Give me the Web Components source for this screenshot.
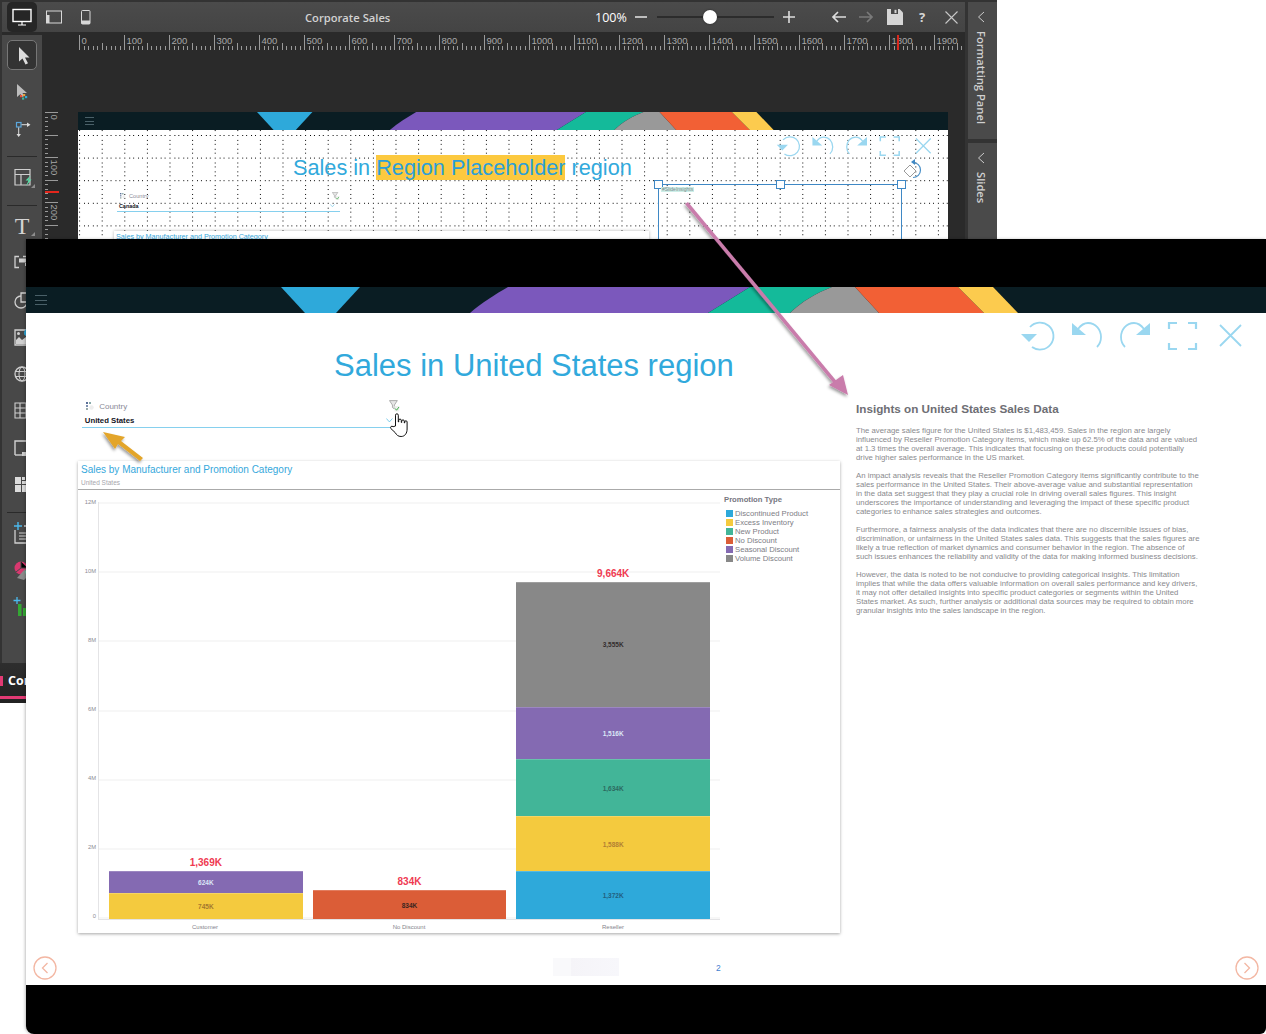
<!DOCTYPE html>
<html lang="en">
<head>
<meta charset="utf-8">
<title>Corporate Sales</title>
<style>
  html, body { margin: 0; height: 100%; background: #fff; overflow: hidden; }
  body { position: relative; font-family: "Liberation Sans", Arial, sans-serif; }
</style>
</head>
<body>
<editor-window></editor-window>
<viewer-window></viewer-window>
<page-annotations></page-annotations>

<script>
class Shadowed extends HTMLElement {
    constructor() {
        super();
        this.attachShadow({ mode: 'open' });
        this.shadowRoot.innerHTML = this.markup();
    }
}

const corner = '<path d="M22 23h4v-4z" fill="#8d8d8d"/>';

const railIcons = {
    select: '<path d="M10 5v14.500l3.500-3 3 6 2.500-1.300-3-5.700h4.500z" fill="#dcdcdc"/>',
    subselect: '<path d="M8 5v13l3.500-3 1.500 3 2-1-1.500-3h4.500z" fill="#bdbdbd"/><rect x="11" y="16" width="2.200" height="2.200" fill="#e8503a"/><rect x="14" y="15" width="2.200" height="2.200" fill="#e9a23b"/><rect x="16" y="17" width="2.200" height="2.200" fill="#2ea9da"/><rect x="13" y="18.500" width="2.200" height="2.200" fill="#42b598"/>',
    connector: '<rect x="7.500" y="6.500" width="4.500" height="4.500" fill="none" stroke="#5aa7dc" stroke-width="1.200"/><path d="M12.500 8.700h6M9.700 11.500v7" stroke="#ddd" fill="none"/><path d="M18 6.500l3.500 2.200-3.500 2.200zM7.500 18l2.200 3 2.200-3z" fill="#ddd"/>',
    dash: '<path d="M6 4.500h15v15.500H6zM6 9.500h15M12 9.500V20" fill="none" stroke="#cfcfcf" stroke-width="1.200"/><path d="M21 11l-4.500 4.500h3L17 21l5.500-6.500h-3l2-3.500z" fill="#58e0a8"/>' + corner,
    image: '<g transform="translate(5 0)"><path d="M5 6.500H1v11h4M9 6.500h13v11" fill="none" stroke="#d0d0d0" stroke-width="1.300"/><rect x="5" y="8.500" width="14" height="4" fill="#d0d0d0"/><rect x="11" y="13" width="8" height="3" fill="#d0d0d0"/></g>',
    pie: '<g transform="translate(5 0)"><circle cx="7" cy="15" r="6" fill="none" stroke="#cfcfcf" stroke-width="1.300"/><path d="M7 6h11v9H7z" fill="#484848" stroke="#cfcfcf" stroke-width="1.300"/></g>',
    picture: '<g transform="translate(5 0)"><path d="M1 6h20v15H1z" fill="none" stroke="#d0d0d0" stroke-width="1.300"/><path d="M2 20v-4l3-3 3 3 4-3 6 5v2z" fill="#d0d0d0"/><circle cx="4.500" cy="9.500" r="1.500" fill="#d0d0d0"/><path d="M10 9c0-3 3-5 6-6v9c-3 1-6 0-6-3z" fill="#2ea9da"/></g>',
    globe: '<g transform="translate(5 0)"><circle cx="8" cy="13" r="7" fill="none" stroke="#cfcfcf" stroke-width="1.300"/><ellipse cx="8" cy="13" rx="3" ry="7" fill="none" stroke="#cfcfcf"/><path d="M1 10.500h14M1 15.500h14" stroke="#cfcfcf"/></g>',
    table: '<g transform="translate(5 0)"><path d="M1 5h16v15H1zM1 10h16M1 15h16M6 5v15M12 5v15" fill="none" stroke="#cfcfcf" stroke-width="1.100"/></g>',
    box: '<g transform="translate(5 0)"><path d="M1 20V6h20v10" fill="none" stroke="#d0d0d0" stroke-width="1.400"/><path d="M1 20h7" stroke="#d0d0d0" stroke-width="1.400"/><rect x="8" y="17" width="10" height="4" fill="#d0d0d0"/></g>',
    blocks: '<g transform="translate(5 0)"><path d="M1 5h6v7H1zM1 13h6v7H1zM8 13h6v7H8zM8 5h3v3H8zM12 5h3v3h-3zM8 9h7v3H8z" fill="#dcdcdc"/></g>',
    report: '<g transform="translate(5 0)"><path d="M1 9v13h14V5h-5" fill="none" stroke="#cfcfcf" stroke-width="1.300"/><path d="M5 12h7M5 15h7M5 18h7" stroke="#cfcfcf"/><path d="M4 1v8M0 5h8" stroke="#4bb8ec" stroke-width="1.400"/></g>',
    piepink: '<g transform="translate(5 0)"><circle cx="7" cy="10" r="6.500" fill="#d8386f"/><path d="M7 3.500V10h6.500M7 10l-5 4" stroke="#484848"/><path d="M3 20l8-9 5 5-6 6z" fill="#8b8b8b"/><path d="M11 13l5 2-3 5z" fill="#6de0b8"/></g>',
    bars: '<g transform="translate(5 0)"><path d="M3 2v7M-.500 5.500h7" stroke="#4bb8ec" stroke-width="1.300"/><rect x="4" y="9" width="3.500" height="12" fill="#34a834"/><rect x="9" y="13" width="4" height="8" fill="#34a834"/></g>'
};

class TopBar extends Shadowed {
    markup() {
        return `
        <style>
          :host { display: flex; align-items: center; height: 30px; background: linear-gradient(#4b4b4b, #444);
                  color: #ddd; font-family: "Open Sans", sans-serif; }
          svg { display: block; flex: none; }
          .active { width: 30px; height: 30px; margin-left: 5px; background: #262626; border-radius: 5px;
                    display: flex; align-items: center; justify-content: center; }
          .title { width: 88px; margin-left: 214px; margin-right: 202px; font-size: 11.200px; font-weight: 600; color: #d2d2d2; white-space: nowrap; }
          .pct { width: 31px; font-size: 12.500px; color: #fff; white-space: nowrap; }
          .slider { position: relative; width: 117px; height: 2px; margin-left: 10px; background: #2c2c2c; }
          .slider i { position: absolute; left: 46px; top: -6px; width: 14px; height: 14px; border-radius: 50%; background: #fff; box-shadow: 0 0 2px #222; }
        </style>
        <div class="active">
          <svg width="22" height="20" viewBox="0 0 22 20"><rect x="2" y="2.500" width="18" height="12" fill="none" stroke="#fff" stroke-width="1.400"/><path d="M11 15v3M7 18h8" stroke="#fff" stroke-width="1.200"/></svg>
        </div>
        <svg style="margin-left:9px" width="17" height="14" viewBox="0 0 17 14"><rect x=".5" y="1" width="15" height="12" fill="none" stroke="#d8d8d8"/><rect x=".5" y="5" width="3" height="8" fill="#d8d8d8"/></svg>
        <svg style="margin-left:18px" width="10" height="15" viewBox="0 0 10 15"><rect x=".5" y=".5" width="8.500" height="13.500" rx="1" fill="none" stroke="#d8d8d8"/><rect x=".5" y="10.500" width="8.500" height="3.500" fill="#d8d8d8"/></svg>
        <div class="title">Corporate Sales</div>
        <div class="pct">100%</div>
        <svg style="margin-left:9px" width="12" height="12" viewBox="0 0 12 12"><path d="M0 6h12" stroke="#ddd" stroke-width="1.600"/></svg>
        <div class="slider"><i></i></div>
        <svg style="margin-left:9px" width="12" height="12" viewBox="0 0 12 12"><path d="M0 6h12M6 0v12" stroke="#ddd" stroke-width="1.600"/></svg>
        <svg style="margin-left:36px" width="15" height="12" viewBox="0 0 15 12"><path d="M15 6H2M7 1L2 6l5 5" fill="none" stroke="#ddd" stroke-width="1.700"/></svg>
        <svg style="margin-left:13px" width="15" height="12" viewBox="0 0 15 12"><path d="M0 6h13M8 1l5 5-5 5" fill="none" stroke="#7a7a7a" stroke-width="1.700"/></svg>
        <svg style="margin-left:13px" width="16" height="16" viewBox="0 0 16 16"><path d="M0 0h12.500L16 3.500V16H0z" fill="#d6d6d6"/><rect x="4" y="0" width="7" height="5" fill="#484848"/><rect x="7.500" y=".8" width="2" height="3.300" fill="#d6d6d6"/></svg>
        <span style="margin-left:16px;width:12px;font:700 13px 'Open Sans',sans-serif;color:#d6d6d6">?</span>
        <svg style="margin-left:14px" width="13" height="13" viewBox="0 0 13 13"><path d="M.5.500l12 12M12.500.500l-12 12" stroke="#c8c8c8" stroke-width="1.100"/></svg>`;
    }
}

class SideRail extends Shadowed {
    markup() {
        const item = (k, extra) => `<div class="item ${extra || ''}"><svg width="26" height="26" viewBox="0 0 26 26">${railIcons[k]}</svg></div>`;
        return `
        <style>
          :host { display: flex; flex-direction: column; align-items: center; width: 40px; margin-top: 3px; padding-top: 1.500px;
                  background: #484848; box-sizing: border-box; }
          .item { width: 40px; height: 37px; flex: none; display: flex; align-items: center; justify-content: center; position: relative; }
          .item.on::before { content: ""; position: absolute; left: 5px; top: 3.500px; width: 28px; height: 28px; background: #333; border: 1px solid #777; border-radius: 5px; }
          .item svg { position: relative; }
          hr { width: 30px; height: 1px; flex: none; margin: 8.500px 0 2px; padding: 0; border: 0; background: #2a2a2a; }
          .t { font: 24px "Liberation Serif", serif; color: #d4d4d4; }
          .tw { position: relative; width: 26px; height: 26px; display: flex; align-items: center; justify-content: center; }
          .tw svg { position: absolute; left: 0; top: 0; }
        </style>
        ${item('select', 'on')}${item('subselect')}${item('connector')}
        <hr>
        ${item('dash')}
        <hr>
        <div class="item"><div class="tw"><span class="t">T</span><svg width="26" height="26" viewBox="0 0 26 26">${corner}</svg></div></div>
        ${item('image')}${item('pie')}${item('picture')}${item('globe')}${item('table')}${item('box')}${item('blocks')}
        <hr>
        ${item('report')}${item('piepink')}${item('bars')}`;
    }
}

class RulerH extends Shadowed {
    markup() {
        let lines = '', labels = '';
        for (let i = 0; i <= 196; i++) {
            const x = (1.5 + i * 4.5).toFixed(1);
            const top = i % 10 === 0 ? 0 : (i % 5 === 0 ? 8 : 11);
            lines += `M${x} ${top}V15`;
            if (i % 10 === 0 && i < 200) {
                labels += `<text x="${+x + 2}" y="9">${i * 10}</text>`;
            }
        }
        return `
        <style>
          :host { display: block; height: 15px; margin-top: 3px; }
          svg { display: block; font: 9.500px "Liberation Sans", sans-serif; fill: #a8a8a8; }
        </style>
        <svg width="887" height="15"><path d="${lines}" stroke="#9a9a9a" shape-rendering="crispEdges"/>${labels}
          <rect x="819" y="0" width="2" height="15" fill="#d8281e"/></svg>`;
    }
}

class RulerV extends Shadowed {
    markup() {
        let lines = '', labels = '';
        for (let i = 0; i <= 28; i++) {
            const y = (i * 4.5 + .5).toFixed(1);
            lines += i % 5 === 0 ? `M0 ${y}H13` : `M0 ${y}H3`;
            if (i % 10 === 0) {
                labels += `<text transform="translate(6 ${+y + 2}) rotate(90)">${i * 10}</text>`;
            }
        }
        return `
        <style>
          :host { display: block; width: 14px; margin-left: 3px; }
          svg { display: block; font: 9.500px "Liberation Sans", sans-serif; fill: #a8a8a8; }
        </style>
        <svg width="14" height="130"><path d="${lines}" stroke="#9a9a9a" shape-rendering="crispEdges"/>${labels}
          <rect x="0" y="79" width="14" height="2" fill="#e3261c"/></svg>`;
    }
}

class SlideBanner extends Shadowed {
    markup() {
        return `
        <style>
          :host { display: block; position: relative; background: #0a1d23; overflow: hidden; }
          svg.art { display: block; width: 100%; height: auto; }
          .menu { position: absolute; left: .9em; top: 50%; width: 1.200em; height: 1em; margin-top: -.5em; box-sizing: border-box;
                  border-top: 1px solid #4a6068; border-bottom: 1px solid #4a6068; font-size: var(--menu, 10px); }
          .menu::after { content: ""; display: block; height: 1px; margin-top: calc(.5em - 1.500px); background: #4a6068; }
        </style>
        <svg class="art" viewBox="0 0 1240 26">
          <path d="M255 0h79l-24 26h-31z" fill="#2ea9da"/>
          <path d="M444 26C455 16 470 7 482 0h242l-42 26z" fill="#7b58bc"/>
          <path d="M682 26L724 0h82c-16 6-31 15-42 26z" fill="#14ba9a"/>
          <path d="M764 26C775 15 790 6 806 0h23l24 26z" fill="#999"/>
          <path d="M829 0h103l26 26H853z" fill="#f26035"/>
          <path d="M932 0h35l25 26h-34z" fill="#fccb4e"/>
        </svg>
        <div class="menu"></div>`;
    }
}

class SlideTools extends Shadowed {
    markup() {
        return `
        <style>
          :host { display: block; flex: none; }
          svg { display: block; width: calc(225px * var(--k, 1)); height: calc(32px * var(--k, 1)); }
        </style>
        <svg viewBox="0 0 225 32" fill="none" stroke="#9ad7f0" stroke-width="1.800">
          <path d="M10 7A13.500 13.500 0 1 1 12 27"/>
          <path d="M1 14h16l-8 8z" fill="#9ad7f0" stroke="none"/>
          <path d="M58 9C61 5 65 3 68 3C76 3 81 10 81 17C81 21 79 25 77 27"/>
          <path d="M52 3V15H66z" fill="#9ad7f0" stroke="none"/>
          <path d="M124 9C121 5 117 3 114 3C106 3 101 10 101 17C101 21 103 25 105 27"/>
          <path d="M130 3V15H116z" fill="#9ad7f0" stroke="none"/>
          <path d="M149 9V3h8M168 3h8v6M149 23v6h8M168 29h8v-6" stroke-width="2.200"/>
          <path d="M200 5l21 21M221 5l-21 21"/>
        </svg>`;
    }
}

class CountryFilter extends Shadowed {
    markup() {
        return `
        <style>
          :host { display: block; width: 39.750em; font-family: "Liberation Sans", sans-serif; }
          .head { display: flex; align-items: center; height: 1.750em; color: #8a8a96; padding-left: .55em; }
          .head svg.c { width: 1em; height: 1em; }
          .head span { margin-left: .6em; }
          .head svg.f { width: 1.350em; height: 1.500em; margin-left: auto; }
          .value { display: flex; align-items: center; height: 1.750em; padding-left: .35em; border-bottom: 1px solid #86d0ee;
                   font-weight: 700; color: #14141e; }
          .value b { font-size: .97em; }
          .value svg { width: .85em; height: .6em; margin-left: auto; margin-right: .9em; }
        </style>
        <div class="head">
          <svg class="c" viewBox="0 0 8 8"><rect x="0" width="2" height="2" fill="#5a6f98"/><rect x="3" width="2" height="2" fill="#8aa"/><rect x="0" y="3" width="2" height="2" fill="#7d8fb0"/><rect x="0" y="6" width="2" height="2" fill="#9aa"/><circle cx="5.500" cy="5.500" r="2.200" fill="#eee"/></svg>
          <span>Country</span>
          <svg class="f" viewBox="0 0 11 12"><path d="M.5.500h8L5.500 5v4L3.500 7.500V5z" fill="#e6e6e6" stroke="#9a9a9a" stroke-width=".8"/><rect x="5.500" y="6" width="5" height="5.500" fill="#eee"/><path d="M6.200 8.500l1.500 1.800 2.500-3.300" fill="none" stroke="#3fae49" stroke-width="1"/></svg>
        </div>
        <div class="value"><b><slot></slot></b>
          <svg viewBox="0 0 9 6"><path d="M.5.500L4.500 5 8.500.500" fill="none" stroke="#55bde4" stroke-width="1"/></svg>
        </div>`;
    }
}

class ChartLegend extends Shadowed {
    markup() {
        const items = [['#2ea9da', 'Discontinued Product'], ['#f4ca3e', 'Excess Inventory'], ['#42b598', 'New Product'],
                       ['#db5d37', 'No Discount'], ['#846ab2', 'Seasonal Discount'], ['#888', 'Volume Discount']];
        return `
        <style>
          :host { display: block; width: 116px; margin-top: -7px; padding: 0 0 0 4px; font: 7.700px/9px "Liberation Sans", sans-serif; color: #7d7d85; }
          h4 { margin: 0 0 5px; font-size: 7.700px; font-weight: 700; line-height: 9px; color: #77777f; }
          div { display: flex; align-items: center; height: 9px; padding-left: 2px; white-space: nowrap; }
          i { width: 7px; height: 7px; margin-right: 2px; flex: none; }
        </style>
        <h4>Promotion Type</h4>
        ${items.map(([c, t]) => `<div><i style="background:${c}"></i>${t}</div>`).join('')}`;
    }
}

class SalesChart extends Shadowed {
    markup() {
        const bars = [
            { label: 'Customer', total: '1,369K', segs: [[22, '#846ab2', '624K', '#dbe7f7'], [26, '#f4ca3e', '745K', '#a5782f']] },
            { label: 'No Discount', total: '834K', segs: [[29, '#db5d37', '834K', '#3a2520']] },
            { label: 'Reseller', total: '9,664K', segs: [[124.5, '#888', '3,555K', '#332d2d'], [52.5, '#846ab2', '1,516K', '#dbe7f7'],
                [57, '#42b598', '1,634K', '#2c6a60'], [55, '#f4ca3e', '1,588K', '#b27f33'], [48, '#2ea9da', '1,372K', '#22607f']] }
        ];
        const barHtml = bars.map(b => `<div class="bar"><div class="total">${b.total}</div>${b.segs.map(s =>
            `<div class="seg" style="height:${s[0]}px;background:${s[1]};color:${s[3]}">${s[2]}</div>`).join('')}</div>`).join('');
        return `
        <style>
          :host { display: flex; flex-direction: column; width: 762px; height: 472px; background: #fff;
                  box-shadow: 0 1px 3px rgba(0,0,0,.35); font-family: "Liberation Sans", sans-serif; }
          header { height: 29px; box-sizing: border-box; padding: 3px 0 0 3px; border-bottom: 1px solid #aaa; flex: none; }
          h3 { margin: 0; font-size: 10px; line-height: 11px; font-weight: 400; color: #36a8dc; white-space: nowrap; }
          p { margin: 4px 0 0; font-size: 6.500px; line-height: 8px; color: #a6a6ac; }
          .body { display: flex; flex: 1; padding-top: 12px; }
          .chart { display: grid; grid-template-columns: 20px 622px; grid-template-rows: 418px auto; }
          .y { display: flex; flex-direction: column; justify-content: space-between; height: 421px; margin-top: -3.500px;
               font-size: 5.800px; line-height: 7px; color: #8d8d95; text-align: right; padding-right: 2px; box-sizing: border-box; }
          .plot { display: flex; align-items: flex-end; gap: 10px; padding: 0 10px; box-sizing: border-box;
                  border-left: 1px solid #e4e4e6; border-bottom: 1px solid #e4e4e6;
                  background: repeating-linear-gradient(#f7f7f7 0 2px, transparent 2px 69.200px); }
          .bar { flex: 1; display: flex; flex-direction: column; }
          .total { height: 14px; margin-bottom: 1px; font-size: 10px; line-height: 14px; font-weight: 700; color: #ef3a52; text-align: center; }
          .seg { display: flex; align-items: center; justify-content: center; font-size: 6.500px; font-weight: 700; box-sizing: border-box;
                 border-top: 1px solid rgba(255,255,255,.2); }
          .x { grid-column: 2; display: flex; gap: 10px; padding: 4px 10px 0; font-size: 6px; line-height: 7px; color: #85858d; text-align: center; box-sizing: border-box; }
          .x span { flex: 1; }
        </style>
        <header><h3>Sales by Manufacturer and Promotion Category</h3><p>United States</p></header>
        <div class="body">
          <div class="chart">
            <div class="y"><span>12M</span><span>10M</span><span>8M</span><span>6M</span><span>4M</span><span>2M</span><span>0</span></div>
            <div class="plot">${barHtml}</div>
            <div class="x">${bars.map(b => `<span>${b.label}</span>`).join('')}</div>
          </div>
          <chart-legend></chart-legend>
        </div>`;
    }
}

class InsightsPanel extends Shadowed {
    markup() {
        return `
        <style>
          :host { display: block; font-family: "Liberation Sans", sans-serif; white-space: nowrap; }
          h2 { margin: 0 0 10px; font-size: 11.700px; line-height: 14px; font-weight: 700; color: #6e6e74; }
          p { margin: 0 0 9px; font-size: 7.770px; line-height: 9px; color: #8a8a8e; }
        </style>
        <h2>Insights on United States Sales Data</h2>
        <p>The average sales figure for the United States is $1,483,459. Sales in the region are largely<br>influenced by Reseller Promotion Category items, which make up 62.5% of the data and are valued<br>at 1.3 times the overall average. This indicates that focusing on these products could potentially<br>drive higher sales performance in the US market.</p>
        <p>An impact analysis reveals that the Reseller Promotion Category items significantly contribute to the<br>sales performance in the United States. Their above-average value and substantial representation<br>in the data set suggest that they play a crucial role in driving overall sales figures. This insight<br>underscores the importance of understanding and leveraging the impact of these specific product<br>categories to enhance sales strategies and outcomes.</p>
        <p>Furthermore, a fairness analysis of the data indicates that there are no discernible issues of bias,<br>discrimination, or unfairness in the United States sales data. This suggests that the sales figures are<br>likely a true reflection of market dynamics and consumer behavior in the region. The absence of<br>such issues enhances the reliability and validity of the data for making informed business decisions.</p>
        <p>However, the data is noted to be not conducive to providing categorical insights. This limitation<br>implies that while the data offers valuable information on overall sales performance and key drivers,<br>it may not offer detailed insights into specific product categories or segments within the United<br>States market. As such, further analysis or additional data sources may be required to obtain more<br>granular insights into the sales landscape in the region.</p>`;
    }
}

class SlideCanvas extends Shadowed {
    markup() {
        return `
        <style>
          :host { display: block; width: 870px; height: 330px; background: #fff; overflow: hidden; font-family: "Liberation Sans", sans-serif; }
          slide-banner { --menu: 7.500px; }
          .body { position: relative; height: 312px; }
          .dots { position: absolute; inset: 0; width: 100%; height: 100%; }
          .flow { position: relative; padding-top: 5px; }
          .top { display: flex; align-items: flex-start; padding-right: 15px; }
          .title { margin: 20px 0 0 215px; font-size: 21.700px; line-height: 25px; color: #31a9dc; white-space: nowrap; }
          .title mark { background: #fcc93f; color: #2c9fd8; }
          slide-tools { --k: .7; margin-left: auto; }
          country-filter { font-size: 5.600px; margin: 11px 0 0 39px; }
          .card { width: 535px; height: 60px; margin: 19px 0 0 36px; background: #fff; box-shadow: 0 0 3px rgba(0,0,0,.3);
                  font-size: 7.200px; color: #36a8dc; padding: 1px 0 0 2px; box-sizing: border-box; white-space: nowrap; }
          .sel { position: absolute; left: 580px; top: 54px; width: 244px; height: 200px; box-sizing: border-box;
                 border: 1px solid #3f88c5; }
          .sel b { position: absolute; top: -5px; width: 7px; height: 7px; background: #fff; border: 1px solid #3f88c5; }
          .sel span { position: absolute; left: 2px; top: 2px; padding: 0 1px; font-size: 5px; line-height: 5px; background: #cdeee8; color: #7c8a8a; }
          .rot { position: absolute; left: -1px; top: -1px; margin: -25px 0 0 244px; }
        </style>
        <slide-banner></slide-banner>
        <div class="body">
          <svg class="dots">
            <defs><pattern id="d" patternUnits="userSpaceOnUse" width="22.600" height="22.600" x="1.100" y="5">
              <path d="M.5 0V22.600M0 .5H22.600" stroke="#000" stroke-dasharray="1 3.520" shape-rendering="crispEdges"/>
            </pattern></defs>
            <rect width="100%" height="100%" fill="url(#d)"/>
          </svg>
          <div class="flow">
            <div class="top">
              <div class="title">Sales in <mark>Region Placeholder</mark> region</div>
              <slide-tools></slide-tools>
            </div>
            <country-filter>Canada</country-filter>
            <div class="card">Sales by Manufacturer and Promotion Category</div>
          </div>
          <div class="sel">
            <b style="left:-5px"></b><b style="left:117px"></b><b style="right:-5px"></b>
            <span>#SlideInsights</span>
            <svg class="rot" width="24" height="22" viewBox="0 0 24 22"><path d="M8 6l6 6-6 6-6-6z" fill="#fff" stroke="#9a9a9a"/><path d="M11 3.500a7.500 7.500 0 1 1 0 15" fill="none" stroke="#4a90c8" stroke-width="1.200"/><path d="M13 0v6l-4-3z" fill="#3f88c5"/></svg>
          </div>
        </div>`;
    }
}

class EditorWindow extends Shadowed {
    markup() {
        return `
        <style>
          :host { position: absolute; left: 0; top: 0; width: 997px; height: 703px; display: flex; flex-direction: column;
                  background: #333; padding-top: 2px; box-sizing: border-box; overflow: hidden; }
          .main { display: flex; height: 661px; padding-left: 2px; flex: none; }
          .left { width: 963px; display: flex; flex-direction: column; background: #2a2a2a; }
          .body { flex: 1; display: flex; min-height: 0; }
          .work { flex: 1; display: grid; grid-template-columns: 36px 1fr; grid-template-rows: 18px 62px auto; min-width: 0; }
          ruler-h { grid-column: 2; grid-row: 1; }
          ruler-v { grid-column: 1; grid-row: 3; }
          slide-canvas { grid-column: 2; grid-row: 3; }
          .side { width: 29px; margin-left: 3px; display: flex; flex-direction: column; gap: 4px; }
          .tab { background: #4a4a4a; color: #d0d0d0; display: flex; flex-direction: column; align-items: center; padding-right: 3px; box-sizing: border-box;
                 font: 600 11.200px "Open Sans", sans-serif; }
          .tab svg { margin: 9px 0 7.500px; flex: none; }
          .tab span { writing-mode: vertical-rl; white-space: nowrap; }
          .foot { height: 40px; background: linear-gradient(#2e2e2e, #222); color: #fff; display: flex; flex-direction: column; flex: none; }
          .foot .row { height: 33px; padding-top: 2px; box-sizing: border-box; display: flex; align-items: center; font: 700 12.500px "Open Sans", sans-serif; }
          .foot i { width: 3px; height: 10px; background: #e23a74; margin-right: 5px; }
          .foot u { display: block; height: 3px; background: #e23a74; }
        </style>
        <div class="main">
          <div class="left">
            <top-bar></top-bar>
            <div class="body">
              <side-rail></side-rail>
              <div class="work">
                <ruler-h></ruler-h>
                <ruler-v></ruler-v>
                <slide-canvas></slide-canvas>
              </div>
            </div>
          </div>
          <div class="side">
            <div class="tab" style="height:137px"><svg width="8" height="12" viewBox="0 0 8 12"><path d="M7 1L1.500 6 7 11" fill="none" stroke="#ccc"/></svg><span>Formatting Panel</span></div>
            <div class="tab" style="flex:1"><svg width="8" height="12" viewBox="0 0 8 12"><path d="M7 1L1.500 6 7 11" fill="none" stroke="#ccc"/></svg><span>Slides</span></div>
          </div>
        </div>
        <div class="foot"><div class="row"><i></i>Corporate Sales</div><u></u></div>`;
    }
}

class ViewerWindow extends Shadowed {
    markup() {
        return `
        <style>
          :host { position: absolute; left: 26px; top: 239px; width: 1240px; height: 795px; display: flex; flex-direction: column;
                  background: #000; border-radius: 0 0 6px 8px; box-shadow: -1px 0 3px rgba(0,0,0,.25); overflow: hidden;
                  font-family: "Liberation Sans", sans-serif; }
          .cap { height: 48px; flex: none; }
          slide-banner { flex: none; --menu: 10px; }
          .main { background: #fff; height: 672px; flex: none; display: grid; grid-template-columns: 830px 410px; grid-template-rows: 632px 40px; }
          .col { padding-left: 52px; box-sizing: border-box; }
          h1 { margin: 35px 0 0 256px; font-size: 31px; line-height: 36px; font-weight: 400; color: #31a9dc; white-space: nowrap; }
          country-filter { font-size: 8px; margin: 15px 0 0 4px; }
          sales-chart { margin-top: 33px; }
          .right slide-tools { margin: 7px 0 0 164px; }
          insights-panel { margin-top: 50px; }
          .pager { grid-column: 1 / 3; display: flex; align-items: flex-start; padding: 11px 7px 0; }
          .pager svg { display: block; flex: none; }
          .ghost { width: 66px; height: 18px; margin: 2px 0 0 496px; flex: none; background: linear-gradient(90deg, #f9f9fb 27%, #f5f4f8 27%, #f7f7fb); }
          .num { margin: 8px 0 0 97px; font-size: 8.500px; line-height: 8px; color: #3f7fd0; }
          .next { margin-left: auto; }
        </style>
        <div class="cap"></div>
        <slide-banner></slide-banner>
        <div class="main">
          <div class="col">
            <h1>Sales in United States region</h1>
            <country-filter>United States</country-filter>
            <sales-chart></sales-chart>
          </div>
          <div class="right">
            <slide-tools></slide-tools>
            <insights-panel></insights-panel>
          </div>
          <div class="pager">
            <svg width="24" height="24" viewBox="0 0 24 24" fill="none" stroke="#f3b7a3" stroke-width="1.300"><circle cx="12" cy="12" r="11"/><path d="M14.500 7l-5 5 5 5"/></svg>
            <div class="ghost"></div>
            <div class="num">2</div>
            <svg class="next" width="24" height="24" viewBox="0 0 24 24" fill="none" stroke="#f3b7a3" stroke-width="1.300"><circle cx="12" cy="12" r="11"/><path d="M9.500 7l5 5-5 5"/></svg>
          </div>
        </div>`;
    }
}

class PageAnnotations extends Shadowed {
    markup() {
        return `
        <style>
          :host { position: absolute; inset: 0; pointer-events: none; }
          svg { position: absolute; left: 0; top: 0; width: 100%; height: 100%; }
        </style>
        <svg viewBox="0 0 1266 1034">
          <defs><filter id="s" x="-10%" y="-10%" width="130%" height="130%"><feDropShadow dx="-1" dy="2" stdDeviation="1.500" flood-color="#000" flood-opacity=".4"/></filter></defs>
          <g filter="url(#s)">
            <path d="M685 204l3-2 151 182-3 2z" fill="#c97bab"/>
            <path d="M848 395l-19-10 14-10z" fill="#c97bab"/>
          </g>
          <g filter="url(#s)">
            <path d="M103 432l22 5-4 4 22 17-3 3-22-17-3 5z" fill="#e3a52b"/>
          </g>
          <path transform="translate(390 413)" d="M5.500 13V2.200a1.400 1.400 0 0 1 2.800 0V9h.4V7.400a1.300 1.300 0 0 1 2.600 0V9.500h.4V8.200a1.300 1.300 0 0 1 2.600 0V10h.4V9a1.200 1.200 0 0 1 2.400 0v7c0 4-2 7.500-6 7.500-3 0-4.500-1.500-6-4L.8 15.500c-1-1.800 1-3 2.300-1.800z" fill="#fff" stroke="#111" stroke-width="1"/>
        </svg>`;
    }
}

customElements.define('top-bar', TopBar);
customElements.define('side-rail', SideRail);
customElements.define('ruler-h', RulerH);
customElements.define('ruler-v', RulerV);
customElements.define('slide-banner', SlideBanner);
customElements.define('slide-tools', SlideTools);
customElements.define('country-filter', CountryFilter);
customElements.define('chart-legend', ChartLegend);
customElements.define('sales-chart', SalesChart);
customElements.define('insights-panel', InsightsPanel);
customElements.define('slide-canvas', SlideCanvas);
customElements.define('editor-window', EditorWindow);
customElements.define('viewer-window', ViewerWindow);
customElements.define('page-annotations', PageAnnotations);
</script>
</body>
</html>
